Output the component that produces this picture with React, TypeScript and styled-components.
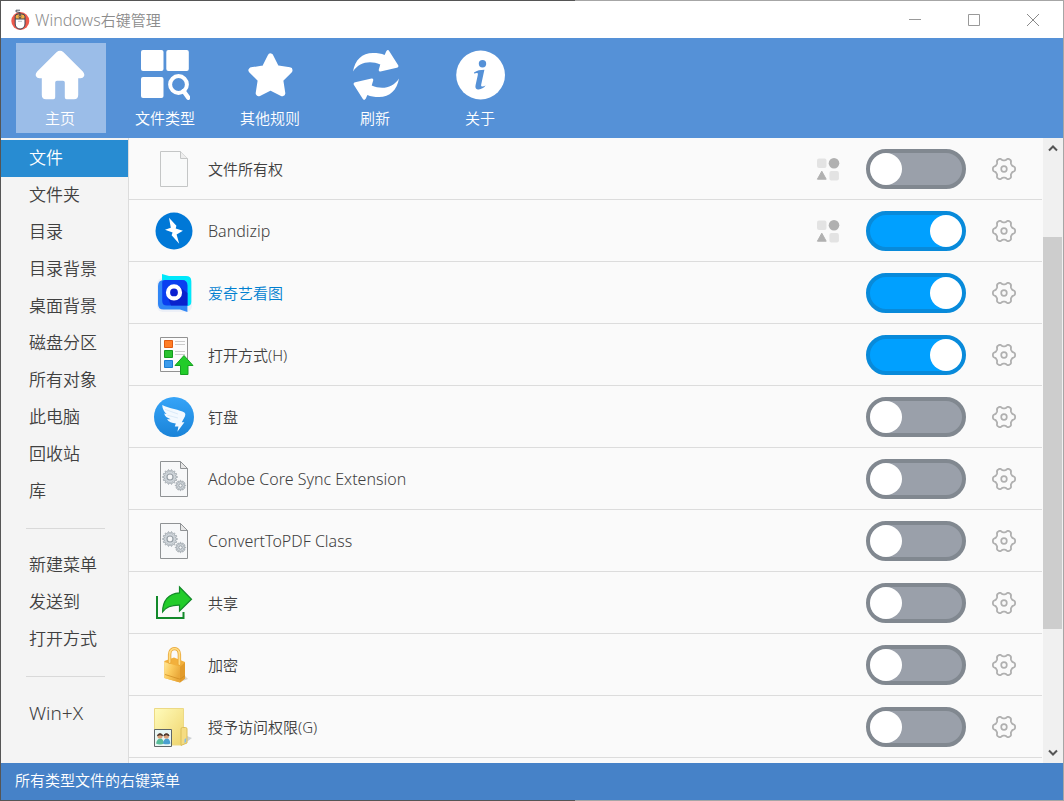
import React, { useState } from 'react';
import styled, { createGlobalStyle } from 'styled-components';

const GlobalStyle = createGlobalStyle`
  *, *::before, *::after { box-sizing: border-box; }
  body { margin: 0; }
  button { font: inherit; color: inherit; border: 0; padding: 0; background: none; cursor: pointer; }
  svg { display: block; flex: none; }
`;

const Frame = styled.div`
  height: 100vh;
  padding: 1px;
  background: linear-gradient(90deg, #555 54%, #a6a6a6 54%);
  font-family: 'Noto Sans', 'Noto Sans CJK SC', sans-serif;
  font-size: 15px;
  font-weight: 350;
  color: #404040;
`;

const Window = styled.div`
  height: 100%;
  display: flex;
  flex-direction: column;
  background: #fafafa;
`;

const TitleBar = styled.header`
  flex: none;
  height: 37px;
  display: flex;
  align-items: center;
  padding: 0 1px 0 9px;
  gap: 5px;
  background: #fff;
  color: #8c8c8c;
`;

const Title = styled.h1`
  flex: 1;
  margin: 0;
  font-size: 15px;
  font-weight: 350;
  line-height: 20px;
`;

const WindowButtons = styled.div`
  display: flex;
  align-self: stretch;
`;

const WindowButton = styled.button`
  width: 59px;
  display: flex;
  align-items: center;
  justify-content: center;
`;

const Toolbar = styled.nav`
  flex: none;
  display: flex;
  gap: 15px;
  padding: 5px 15px;
  background: #5591d7;
`;

const Tool = styled.button<{ $active: boolean }>`
  width: 90px;
  height: 90px;
  padding: 7px 2px 0 0;
  display: flex;
  flex-direction: column;
  align-items: center;
  gap: 8px;
  background: ${(p) => (p.$active ? '#9bbde8' : 'transparent')};
  color: #fff;
  line-height: 20px;
`;

const Body = styled.div`
  flex: 1;
  min-height: 0;
  display: flex;
`;

const Sidebar = styled.nav`
  flex: none;
  width: 128px;
  padding-top: 2px;
  background: #f4f4f4;
  border-right: 1px solid #dcdcdc;
  overflow: hidden;
`;

const SideItem = styled.button<{ $active: boolean }>`
  width: 100%;
  height: 37px;
  padding: 0 0 2px 28px;
  display: flex;
  align-items: center;
  font-size: 17px;
  line-height: 24px;
  background: ${(p) => (p.$active ? '#288cd2' : 'transparent')};
  color: ${(p) => (p.$active ? '#fff' : '#404040')};
`;

const SideDivider = styled.hr`
  margin: 18px 23px 18px 25px;
  border: 0;
  height: 1px;
  background: #d9d9d9;
`;

const List = styled.ul`
  flex: 1;
  min-width: 0;
  margin: 0 1px 0 0;
  padding: 0;
  list-style: none;
  overflow: hidden;
`;

const Row = styled.li`
  height: 62px;
  padding: 0 26px 0 25px;
  display: flex;
  align-items: center;
  gap: 26px;
  border-bottom: 1px solid #dcdcdc;
`;

const RowLabel = styled.label<{ $highlight: boolean }>`
  flex: 1;
  min-width: 0;
  display: flex;
  align-items: center;
  gap: 14px;
  line-height: 20px;
  color: ${(p) => (p.$highlight ? '#0080d0' : '#404040')};
`;

const Latin = styled.span<{ $size: number }>`
  font-size: ${(p) => p.$size}px;
`;

const Switch = styled.input`
  appearance: none;
  flex: none;
  display: flex;
  align-items: center;
  width: 100px;
  height: 40px;
  margin: 0;
  border: 4px solid #818890;
  border-radius: 20px;
  background: #9aa0aa;
  cursor: pointer;

  &::before {
    content: '';
    width: 32px;
    height: 32px;
    border-radius: 50%;
    background: #fff;
  }

  &:checked {
    justify-content: flex-end;
    border-color: #088ada;
    background: #00a0ff;
  }
`;

const IconButton = styled.button`
  flex: none;
`;

const ScrollBar = styled.div`
  flex: none;
  width: 20px;
  padding-right: 1px;
  display: flex;
  flex-direction: column;
  background: #f0f0f0;
`;

const ScrollArrow = styled.button`
  height: 20px;
  display: flex;
  align-items: center;
  justify-content: center;
`;

const ScrollSpace = styled.div<{ $share: number }>`
  flex: ${(p) => p.$share};
`;

const ScrollThumb = styled(ScrollSpace)`
  background: #cdcdcd;
`;

const StatusBar = styled.footer`
  flex: none;
  height: 37px;
  padding: 0 14px 4px;
  display: flex;
  align-items: center;
  background: #4682c8;
  color: #fff;
`;

/* Closed gear outline: `teeth` lobes swinging around radius `r` by `depth`. */
function gearPath(cx: number, cy: number, r: number, depth: number, teeth: number, sharp: number) {
  const steps = teeth * 20;
  const points: string[] = [];
  for (let i = 0; i < steps; i++) {
    const a = (i / steps) * Math.PI * 2;
    const d = r + (depth * Math.tanh(sharp * Math.cos(teeth * a))) / Math.tanh(sharp);
    points.push(`${(cx + d * Math.cos(a)).toFixed(2)} ${(cy + d * Math.sin(a)).toFixed(2)}`);
  }
  return `M${points.join('L')}Z`;
}

const settingsGear = gearPath(12, 12, 9.9, 1.2, 6, 1.8);
const bigGear = gearPath(16, 18, 6.5, 0.9, 14, 2);
const smallGear = gearPath(26.5, 26.5, 4.3, 0.8, 12, 2);

const LogoIcon = () => (
  <svg width="20" height="22" viewBox="0 0 20 22" aria-hidden="true">
    <circle cx="10.3" cy="12" r="9" fill="#ee5a4c" />
    <path d="M10 5V3.5L6 2.8V1.2H10" fill="none" stroke="#3a4554" strokeWidth="0.9" />
    <path d="M5.2 9.5h9.8V15a4.9 5 0 0 1-9.8 0z" fill="#fff" />
    <path d="M5.2 10V7.5q0-2.5 3-2.5h3.8q3 0 3 2.5V10z" fill="#f5ae45" />
    <path d="M5.2 7.5q0-2.5 3-2.5h3.8q3 0 3 2.5V15a4.9 5 0 0 1-9.8 0zM5.2 10H15M10 5v5" fill="none" stroke="#3a4554" strokeWidth="1" />
    <path d="M9 6.5h2v2H9z" fill="#f5ae45" stroke="#3a4554" strokeWidth="0.6" />
    <path d="M8 12.3h4" stroke="#8a93a0" strokeWidth="0.6" />
  </svg>
);

const HomeIcon = () => (
  <svg width="50" height="50" viewBox="0 0 50 50" fill="#fff" aria-hidden="true">
    <path d="M21.5 2.2Q25 -0.6 28.5 2.2L47.8 21.5Q50 24 49 26.2Q48 28.2 45.5 28.2H43.2V45Q43.2 49.2 39 49.2H31.6Q29.8 49.2 29.8 47.2V32.5Q29.8 30.8 28 30.8H22Q20.2 30.8 20.2 32.5V47.2Q20.2 49.2 18.4 49.2H11Q6.8 49.2 6.8 45V28.2H4.5Q2 28.2 1 26.2Q0 24 2.2 21.5Z" />
  </svg>
);

const TypesIcon = () => (
  <svg width="50" height="50" viewBox="0 0 50 50" fill="#fff" aria-hidden="true">
    <rect x="1" y="0" width="22.5" height="21" rx="2" />
    <rect x="26.3" y="0" width="22.5" height="21" rx="2" />
    <rect x="1" y="27" width="22.5" height="21" rx="2" />
    <circle cx="38.5" cy="34.5" r="8.4" fill="none" stroke="#fff" strokeWidth="4" />
    <path d="M43.5 41L48.3 47.6" stroke="#fff" strokeWidth="4.4" strokeLinecap="round" />
  </svg>
);

const StarIcon = () => (
  <svg width="50" height="50" viewBox="0 0 50 50" fill="#fff" aria-hidden="true">
    <path
      d="M25.5 6.5L31.4 18.3L44.5 20.3L35.2 29.6L37.3 43.2L25.5 37.4L13.7 43.2L15.8 29.6L6.5 20.3L19.6 18.3Z"
      stroke="#fff"
      strokeWidth="6"
      strokeLinejoin="round"
    />
  </svg>
);

const refreshArrow =
  'M3 21.5C5 10 12 3 23 3C27.5 3 31.5 3.5 34.6 5L36.3 1.2Q38 -1 39.3 1.2L48.2 15.3Q49 17.4 46.8 17.8L30.5 21.6Q28.4 21.8 28.8 19.6L30.3 14.4C20 10 9 12 3 21.5Z';

const RefreshIcon = () => (
  <svg width="50" height="50" viewBox="0 0 50 50" fill="#fff" aria-hidden="true">
    <path d={refreshArrow} />
    <path d={refreshArrow} transform="rotate(180 26 25)" />
  </svg>
);

const AboutIcon = () => (
  <svg width="50" height="50" viewBox="0 0 50 50" aria-hidden="true">
    <circle cx="25.6" cy="25" r="24.4" fill="#fff" />
    <circle cx="27.5" cy="13.8" r="3.7" fill="#5591d7" />
    <path
      d="M19 22.6C22 20.4 25.4 19.8 29.4 19.8L26.2 34.4C25.7 36.8 27.2 37 30.6 35.6C28.6 38.4 25.8 39.7 22.8 39.4C20.6 39.2 20 37.6 20.6 35L22.8 25C23.2 23 22.4 22.6 19 23.6Z"
      fill="#5591d7"
    />
  </svg>
);

const SettingsIcon = () => (
  <svg width="24" height="24" viewBox="0 0 24 24" fill="none" stroke="#b0b0b0" aria-hidden="true">
    <path d={settingsGear} strokeWidth="1.8" strokeLinejoin="round" />
    <circle cx="12" cy="12" r="2.8" strokeWidth="1.7" />
  </svg>
);

const GroupIcon = () => (
  <svg width="24" height="24" viewBox="0 0 24 24" aria-hidden="true">
    <rect x="1" y="1.5" width="9.5" height="9.5" rx="2" fill="#e3e3e3" />
    <circle cx="18" cy="6.2" r="5.3" fill="#b0b0b0" />
    <path d="M5.8 14.2L10.2 22.2H1.4Z" fill="#b0b0b0" stroke="#b0b0b0" strokeLinejoin="round" />
    <rect x="13.4" y="14" width="9.5" height="9.5" rx="2" fill="#e3e3e3" />
  </svg>
);

const Picture = ({ children }: { children: React.ReactNode }) => (
  <svg width="40" height="40" viewBox="0 0 40 40" aria-hidden="true">
    {children}
  </svg>
);

const FileIcon = () => (
  <Picture>
    <path d="M6.5 2.5H26.5L33.5 9.5V37.5H6.5Z" fill="#f9fafa" stroke="#c4c6c6" />
    <path d="M26.5 2.5V9.5H33.5" fill="#eee" stroke="#c4c6c6" />
  </Picture>
);

const BandizipIcon = () => (
  <Picture>
    <circle cx="20" cy="20" r="18.5" fill="#0078d7" />
    <path d="M15 6.7L22.4 14.8L21.7 17.4L28.9 19.8L22.6 23.6L25.2 32.8L17.6 24.2L18.6 21.6L11 18.8L16.8 16.8Z" fill="#fff" />
  </Picture>
);

const ViewerIcon = () => (
  <Picture>
    <rect x="3" y="5" width="35" height="34" rx="6" fill="#dfe6f4" opacity="0.5" />
    <path d="M8 1L15 3H32Q37.3 3 37.3 8V29Q37.3 33 33 33H8Z" fill="#00e8fb" />
    <path d="M10 7H28Q33.4 7 33.4 12.5V39L26 36.6H9.5Q4 36.6 4 31V13Q4 7 10 7Z" fill="#2f86f6" />
    <path d="M8.2 8.5Q9 7 11 7H28Q33.4 7 33.4 12.5V32.5H13Q8.2 32.5 8.2 28Z" fill="#0a3ff0" />
    <path d="M26 14L33.4 20V32.5H17L14 25Z" fill="#0a22cc" />
    <circle cx="20" cy="19.4" r="6" fill="#0b1fd0" stroke="#fff" strokeWidth="4.2" />
  </Picture>
);

const OpenWithIcon = () => (
  <Picture>
    <path d="M6.5 2.5H33.5V36.5H6.5Z" fill="#fcfcfc" stroke="#929292" />
    <path d="M10.5 5.5h8v7h-8z" fill="#ff7d26" stroke="#e05a10" />
    <path d="M10.5 15.5h8v7h-8z" fill="#2bc22f" stroke="#159a1e" />
    <path d="M10.5 25.5h8v7h-8z" fill="#3c9cec" stroke="#1c7fd2" />
    <path d="M21 6.5h10M21 9.5h10M21 16.5h10M21 19.5h10" stroke="#ccc" />
    <path d="M30 20.5L39 30.5H34V39.5H26.5V30.5H21Z" fill="#22cc2a" stroke="#17a022" />
  </Picture>
);

const DingIcon = () => (
  <Picture>
    <defs>
      <linearGradient id="ding" x1="0" y1="0" x2="0" y2="1">
        <stop offset="0" stopColor="#36a4f8" />
        <stop offset="1" stopColor="#1a83d8" />
      </linearGradient>
    </defs>
    <circle cx="20" cy="20" r="20" fill="url(#ding)" />
    <path
      d="M8.2 8C15 11.6 26 12.6 30.4 15.6Q32 16.8 31 19.2L27.8 25.3H30.4L23.4 34.8L24.4 29.4H20.8L21.8 26.4C18 26.2 14.6 25 13 22.2L16.6 22.2C13 21 10.9 19.4 10.2 16.6L12.6 17C10 14.6 8.4 12 8.2 8Z"
      fill="#f3f9ff"
    />
    <path d="M11 12.4L24 17M13.4 18.2L24 21" stroke="#d3e6f7" strokeWidth="0.8" />
  </Picture>
);

const LibraryIcon = () => (
  <Picture>
    <path d="M6.5 2.5H26.5L33.5 9.5V37.5H6.5Z" fill="#f7f8f9" stroke="#8f9294" />
    <path d="M26.5 2.5V9.5H33.5Z" fill="#e6e6e6" stroke="#8f9294" />
    <path d={bigGear} fill="#cfd5da" stroke="#98a0a7" strokeWidth="0.9" />
    <circle cx="16" cy="18" r="3" fill="#f7f8f9" stroke="#98a0a7" strokeWidth="1.2" />
    <path d={smallGear} fill="#cfd5da" stroke="#98a0a7" strokeWidth="0.9" />
    <circle cx="26.5" cy="26.5" r="1.7" fill="#f7f8f9" stroke="#98a0a7" />
  </Picture>
);

const ShareIcon = () => (
  <Picture>
    <path d="M3 13V35H29.5V29" fill="none" stroke="#12892a" strokeWidth="2" />
    <path d="M25.5 4L37.5 16.3L25.5 28V22.2C17.5 22 12.5 23.6 8.6 28.8C8.6 17.6 14.6 10.4 25.5 9.8Z" fill="#22cc2a" stroke="#128a28" strokeWidth="1.2" />
  </Picture>
);

const LockIcon = () => (
  <Picture>
    <defs>
      <linearGradient id="lock" x1="0" y1="0" x2="1" y2="0.5">
        <stop offset="0" stopColor="#ffe89a" />
        <stop offset="0.5" stopColor="#fbc95a" />
        <stop offset="1" stopColor="#e9a83a" />
      </linearGradient>
    </defs>
    <path d="M26 37L34 34L31 31Z" fill="#d8d4cc" />
    <path d="M10.3 16L20 12.6L31 17V33.6L26 37.6L10.3 33Z" fill="#f2b03c" />
    <path d="M10.3 17L26 21.8V37.6L10.3 33Z" fill="url(#lock)" />
    <path d="M26 21.8L31 17.4V33.6L26 37.6Z" fill="#e29b2b" />
    <path d="M11 29.5L26 34.2L31 30.6" fill="none" stroke="#cf8a20" strokeWidth="0.7" />
    <path d="M15.6 17V9.5C15.6 1.6 25.4 1.6 25.4 9.5V19" fill="none" stroke="#e8a534" strokeWidth="3.4" strokeLinecap="round" />
    <path d="M15.6 17V9.5C15.6 1.6 25.4 1.6 25.4 9.5V19" fill="none" stroke="#ffdc84" strokeWidth="1.8" strokeLinecap="round" />
  </Picture>
);

const AccessIcon = () => (
  <Picture>
    <defs>
      <linearGradient id="folder" x1="0" y1="0" x2="1" y2="1">
        <stop offset="0" stopColor="#fffcbc" />
        <stop offset="1" stopColor="#efd46c" />
      </linearGradient>
    </defs>
    <path d="M30 37L38 31L33 29Z" fill="#cfd2d4" />
    <path d="M0.5 1.5H29.5V21L28 38H0.5Z" fill="url(#folder)" stroke="#ecd985" />
    <path d="M27 22Q27 20.5 28.5 20.5H31.5Q33 20.5 33 22V36L27 38.4Z" fill="#f5dc82" stroke="#dcbe5a" />
    <path d="M30.5 32.5l1.6-1.4V35l-1.6 1.2z" fill="#86bde8" />
    <path d="M0.5 22.5h17v17h-17z" fill="#e9f7f4" stroke="#5f6668" />
    <path d="M2 36.5Q3 32 6 31.5T10 36.5Q6 38.4 2 36.5Z" fill="#58bd9a" />
    <path d="M9 36.5Q9.6 32 12.6 31.5T16.4 36.5Q12.6 38.2 9 36.5Z" fill="#4a9fd0" />
    <circle cx="6" cy="29" r="2.6" fill="#d9a178" />
    <circle cx="12.4" cy="29" r="2.6" fill="#d9a178" />
    <path d="M3.4 28.6A2.8 2.8 0 0 1 8.7 28.6Q6 26.8 3.4 28.6ZM9.8 28.6A2.8 2.8 0 0 1 15.1 28.6Q12.4 26.8 9.8 28.6Z" fill="#4a382e" stroke="#4a382e" />
  </Picture>
);

const MinimizeIcon = () => (
  <svg width="12" height="12" stroke="#999" aria-hidden="true">
    <path d="M0 5.5h12" />
  </svg>
);
const MaximizeIcon = () => (
  <svg width="12" height="12" stroke="#999" fill="none" aria-hidden="true">
    <path d="M0.5 0.5h11v11h-11z" />
  </svg>
);
const CloseIcon = () => (
  <svg width="12" height="12" stroke="#8a8a8a" aria-hidden="true">
    <path d="M0 0L12 12M12 0L0 12" />
  </svg>
);
const Chevron = ({ d }: { d: string }) => (
  <svg width="10" height="8" fill="none" stroke="#555" strokeWidth="2" aria-hidden="true">
    <path d={d} />
  </svg>
);

const tools = [
  { label: '主页', Icon: HomeIcon },
  { label: '文件类型', Icon: TypesIcon },
  { label: '其他规则', Icon: StarIcon },
  { label: '刷新', Icon: RefreshIcon },
  { label: '关于', Icon: AboutIcon },
];

const sideGroups = [
  ['文件', '文件夹', '目录', '目录背景', '桌面背景', '磁盘分区', '所有对象', '此电脑', '回收站', '库'],
  ['新建菜单', '发送到', '打开方式'],
  ['Win+X'],
];

const rows = [
  { label: '文件所有权', Icon: FileIcon, on: false, grouped: true },
  { label: 'Bandizip', Icon: BandizipIcon, on: true, grouped: true, latin: true },
  { label: '爱奇艺看图', Icon: ViewerIcon, on: true, highlight: true },
  { label: '打开方式(H)', Icon: OpenWithIcon, on: true },
  { label: '钉盘', Icon: DingIcon, on: false },
  { label: 'Adobe Core Sync Extension', Icon: LibraryIcon, on: false, latin: true },
  { label: 'ConvertToPDF Class', Icon: LibraryIcon, on: false, latin: true },
  { label: '共享', Icon: ShareIcon, on: false },
  { label: '加密', Icon: LockIcon, on: false },
  { label: '授予访问权限(G)', Icon: AccessIcon, on: false },
];

export default function App() {
  const [tool, setTool] = useState('主页');
  const [section, setSection] = useState('文件');

  return (
    <>
      <GlobalStyle />
      <Frame>
        <Window>
          <TitleBar>
            <LogoIcon />
            <Title><Latin $size={16}>Windows</Latin>右键管理</Title>
            <WindowButtons>
              <WindowButton aria-label="最小化"><MinimizeIcon /></WindowButton>
              <WindowButton aria-label="最大化"><MaximizeIcon /></WindowButton>
              <WindowButton aria-label="关闭"><CloseIcon /></WindowButton>
            </WindowButtons>
          </TitleBar>
          <Toolbar>
            {tools.map(({ label, Icon }) => (
              <Tool key={label} $active={label === tool} onClick={() => setTool(label)}>
                <Icon />
                {label}
              </Tool>
            ))}
          </Toolbar>
          <Body>
            <Sidebar>
              {sideGroups.map((group, index) => (
                <React.Fragment key={group[0]}>
                  {index > 0 && <SideDivider />}
                  {group.map((name) => (
                    <SideItem key={name} $active={name === section} onClick={() => setSection(name)}>
                      {name === 'Win+X' ? <Latin $size={19}>{name}</Latin> : name}
                    </SideItem>
                  ))}
                </React.Fragment>
              ))}
            </Sidebar>
            <List>
              {rows.map(({ label, Icon, on, grouped, latin, highlight }, index) => (
                <Row key={label}>
                  <RowLabel htmlFor={`item-${index}`} $highlight={!!highlight}>
                    <Icon />
                    {latin ? <Latin $size={16}>{label}</Latin> : <span>{label}</span>}
                  </RowLabel>
                  {grouped && <GroupIcon />}
                  <Switch id={`item-${index}`} type="checkbox" role="switch" defaultChecked={on} />
                  <IconButton aria-label={`${label} 设置`}><SettingsIcon /></IconButton>
                </Row>
              ))}
            </List>
            <ScrollBar>
              <ScrollArrow aria-label="向上滚动"><Chevron d="M1 6.5L5 2.5L9 6.5" /></ScrollArrow>
              <ScrollSpace $share={79} />
              <ScrollThumb $share={392} />
              <ScrollSpace $share={114} />
              <ScrollArrow aria-label="向下滚动"><Chevron d="M1 1.5L5 5.5L9 1.5" /></ScrollArrow>
            </ScrollBar>
          </Body>
          <StatusBar>所有类型文件的右键菜单</StatusBar>
        </Window>
      </Frame>
    </>
  );
}
